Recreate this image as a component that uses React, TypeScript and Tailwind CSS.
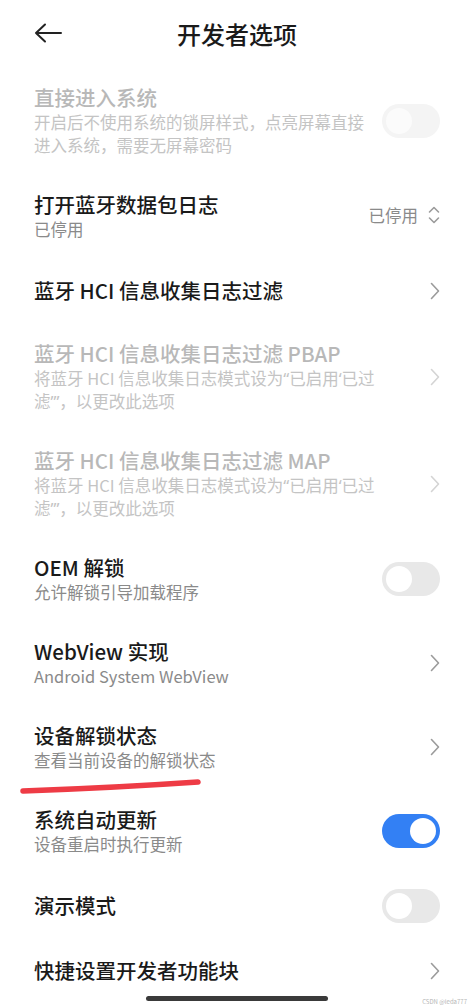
const Chevron = ({ light }: { light?: boolean }) => (
  <svg width="10" height="18" viewBox="0 0 10 18" fill="none">
    <path
      d="M1.5 1.5 L8.5 9 L1.5 16.5"
      stroke={light ? "#d4d4d4" : "#9b9b9b"}
      strokeWidth="1.6"
      strokeLinecap="round"
      strokeLinejoin="round"
    />
  </svg>
);

const Toggle = ({ on, faded }: { on?: boolean; faded?: boolean }) => (
  <div
    className={
      "w-[58px] h-[34px] rounded-full flex items-center px-[4px] shrink-0 " +
      (on ? "bg-[#3380f4] justify-end" : faded ? "bg-[#f4f4f4] justify-start" : "bg-[#e8e8e8] justify-start")
    }
  >
    <div className={"w-[26px] h-[26px] rounded-full " + (faded ? "bg-[#fbfbfb]" : "bg-white")} />
  </div>
);

// narrow quote marks, as the phone font draws them
const Q = ({ c }: { c: string }) => <span style={{ fontFamily: '"Noto Sans", sans-serif' }}>{c}</span>;

type RowProps = {
  title: string;
  sub?: React.ReactNode;
  disabled?: boolean;
  right?: React.ReactNode;
};

const Row = ({ title, sub, disabled, right }: RowProps) => (
  <div className={"flex items-center justify-between pl-[34px] pr-[34px] " + (sub ? "py-[17px]" : "h-[65px]")}>
    <div className="flex flex-col">
      <p
        className={
          "text-[20.5px] leading-[27px] font-medium whitespace-nowrap " + (disabled ? "text-[#b8b8b8]" : "text-[#1a1a1a]")
        }
      >
        {title}
      </p>
      {sub && (
        <p className={"text-[16.5px] leading-[23px] whitespace-nowrap " + (disabled ? "text-[#c4c4c4]" : "text-[#8a8a8a]")}>
          {sub}
        </p>
      )}
    </div>
    <div className="flex items-center">{right}</div>
  </div>
);

const HciSub = () => (
  <>
    将蓝牙 HCI 信息收集日志模式设为<Q c="“" />已启用<Q c="‘" />已过
    <br />
    滤<Q c="’”" />，以更改此选项
  </>
);

export default function App() {
  return (
    <div
      className="relative w-[474px] h-[1008px] overflow-hidden bg-white"
      style={{ fontFamily: '"Noto Sans CJK SC", "Noto Sans", sans-serif' }}
    >
      {/* Header */}
      <div className="relative h-[67px] flex items-center justify-center">
        <svg className="absolute left-[34px] top-[23px]" width="28" height="20" viewBox="0 0 28 20" fill="none">
          <path d="M2 10 H27 M11 1.5 L2 10 L11 18.5" stroke="#222" strokeWidth="2" strokeLinecap="round" strokeLinejoin="round" />
        </svg>
        <h1 className="text-[24px] text-[#1a1a1a] font-medium">开发者选项</h1>
      </div>

      <Row
        title="直接进入系统"
        disabled
        sub={
          <>
            开启后不使用系统的锁屏样式，点亮屏幕直接
            <br />
            进入系统，需要无屏幕密码
          </>
        }
        right={<Toggle faded />}
      />
      <Row
        title="打开蓝牙数据包日志"
        sub="已停用"
        right={
          <div className="flex items-center gap-[10px] -mt-[2px]">
            <span className="text-[16.5px] text-[#8a8a8a]">已停用</span>
            <svg width="12" height="18" viewBox="0 0 12 18" fill="none">
              <path
                d="M1.5 6 L6 1.5 L10.5 6 M1.5 12 L6 16.5 L10.5 12"
                stroke="#9b9b9b"
                strokeWidth="1.6"
                strokeLinecap="round"
                strokeLinejoin="round"
              />
            </svg>
          </div>
        }
      />
      <Row title="蓝牙 HCI 信息收集日志过滤" right={<Chevron />} />
      <Row title="蓝牙 HCI 信息收集日志过滤 PBAP" disabled sub={<HciSub />} right={<Chevron light />} />
      <Row title="蓝牙 HCI 信息收集日志过滤 MAP" disabled sub={<HciSub />} right={<Chevron light />} />
      <Row title="OEM 解锁" sub="允许解锁引导加载程序" right={<Toggle />} />
      <Row title="WebView 实现" sub="Android System WebView" right={<Chevron />} />
      <div className="relative">
        <Row title="设备解锁状态" sub="查看当前设备的解锁状态" right={<Chevron />} />
        {/* red annotation stroke */}
        <svg className="absolute left-[20px] top-[72px]" width="182" height="20" viewBox="0 0 182 20" fill="none">
          <path d="M3 14 C 60 12, 120 9, 178 5" stroke="#ee3b45" strokeWidth="5.5" strokeLinecap="round" />
        </svg>
      </div>
      <Row title="系统自动更新" sub="设备重启时执行更新" right={<Toggle on />} />
      <Row title="演示模式" right={<Toggle />} />
      <Row title="快捷设置开发者功能块" right={<Chevron />} />

      {/* gesture bar */}
      <div className="absolute left-[146px] top-[996px] w-[182px] h-[5px] rounded-full bg-[#3a3a3a]" />
      <span className="absolute right-[7px] top-[998px] text-[6px] leading-[8px] text-[#b5b5b5]">CSDN @leda777</span>
    </div>
  );
}
